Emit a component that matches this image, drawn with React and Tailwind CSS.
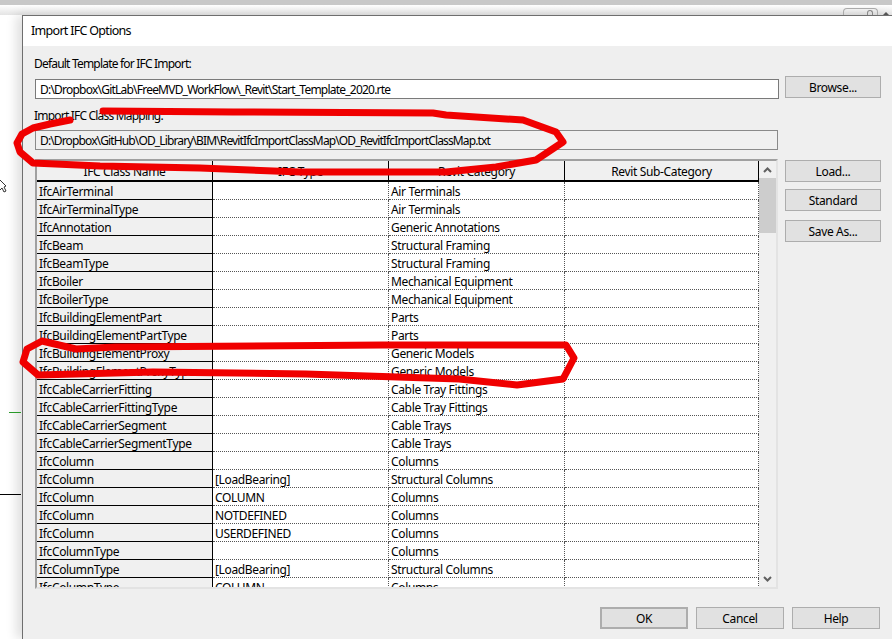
const rows = [
  ["IfcAirTerminal", "", "Air Terminals"],
  ["IfcAirTerminalType", "", "Air Terminals"],
  ["IfcAnnotation", "", "Generic Annotations"],
  ["IfcBeam", "", "Structural Framing"],
  ["IfcBeamType", "", "Structural Framing"],
  ["IfcBoiler", "", "Mechanical Equipment"],
  ["IfcBoilerType", "", "Mechanical Equipment"],
  ["IfcBuildingElementPart", "", "Parts"],
  ["IfcBuildingElementPartType", "", "Parts"],
  ["IfcBuildingElementProxy", "", "Generic Models"],
  ["IfcBuildingElementProxyType", "", "Generic Models"],
  ["IfcCableCarrierFitting", "", "Cable Tray Fittings"],
  ["IfcCableCarrierFittingType", "", "Cable Tray Fittings"],
  ["IfcCableCarrierSegment", "", "Cable Trays"],
  ["IfcCableCarrierSegmentType", "", "Cable Trays"],
  ["IfcColumn", "", "Columns"],
  ["IfcColumn", "[LoadBearing]", "Structural Columns"],
  ["IfcColumn", "COLUMN", "Columns"],
  ["IfcColumn", "NOTDEFINED", "Columns"],
  ["IfcColumn", "USERDEFINED", "Columns"],
  ["IfcColumnType", "", "Columns"],
  ["IfcColumnType", "[LoadBearing]", "Structural Columns"],
  ["IfcColumnType", "COLUMN", "Columns"],
];

function Btn({ children, className = "" }) {
  return (
    <div className={`flex h-[22px] items-center justify-center border border-[#adadad] bg-[#e1e1e1] pt-[2px] ${className}`}>
      {children}
    </div>
  );
}

function Head({ children, className = "" }) {
  return (
    <div className={`flex h-[21px] shrink-0 items-center justify-center border-r border-b-2 border-r-black border-b-black bg-[#f0f0f0] pt-[2px] ${className}`}>
      {children}
    </div>
  );
}

function Row({ r }) {
  return (
    <div className="flex h-[18px] shrink-0 leading-[19px]">
      <div className="w-[176px] shrink-0 overflow-hidden whitespace-nowrap border-r border-b border-black bg-[#f0f0f0] pl-[2px]">{r[0]}</div>
      <div className="w-[176px] shrink-0 overflow-hidden border-r border-b border-dotted border-[#555] pl-[2px]">{r[1]}</div>
      <div className="w-[176px] shrink-0 overflow-hidden border-r border-b border-dotted border-[#555] pl-[2px]">{r[2]}</div>
      <div className="w-[194px] shrink-0 border-r border-b border-dotted border-[#555]"></div>
    </div>
  );
}

export default function App() {
  return (
    <div className="relative h-[639px] w-[892px] overflow-hidden bg-white font-['Noto_Sans',sans-serif] text-[12px] tracking-[-0.35px] text-black">
      <div className="h-[5px] bg-[#c8c8c8]"></div>
      <div className="h-[10px] bg-gradient-to-b from-white to-[#e4e4e4]"></div>

      {/* Window-behind details */}
      <div className="absolute left-[843px] top-[8px] h-[7px] w-[35px] rounded-t-[4px] border-x border-t border-[#aaa]"></div>
      <div className="absolute left-[867px] top-[10px] h-[5px] w-[6px] rounded-t-full border-x border-t border-[#888]"></div>
      <svg className="absolute left-[883px] top-[12px]" width="6" height="3" viewBox="0 0 6 3"><path d="M0 3 L3 0 L6 3 Z" fill="#555" /></svg>
      <div className="absolute left-[9px] top-[412px] h-px w-[12px] bg-[#2a9a2a]"></div>
      <div className="absolute left-0 top-[494px] h-px w-[21px] bg-black"></div>
      <svg className="absolute left-0 top-[179px]" width="8" height="14" viewBox="0 0 8 14">
        <path d="M0 1 L6 7 L4 8 L6 12 L4 13 L2 9 L0 11" fill="white" stroke="#333" strokeWidth="1" />
      </svg>

      {/* Dialog */}
      <div className="ml-[22px] h-[624px] w-[870px] border-l border-t border-[#6e6e6e] shadow-[-6px_0_10px_rgba(0,0,0,0.12)]">
        <div className="flex h-[30px] items-center bg-white pl-[8px] text-[12.5px] tracking-[-0.7px]">Import IFC Options</div>
        <div className="flex h-[593px] flex-col bg-[#efefef] pl-[12px]">
          <div className="-ml-px mt-[10px] h-[16px] leading-[16px] tracking-[-0.8px]">Default Template for IFC Import:</div>
          <div className="flex items-start">
            <div className="mt-[7px] flex h-[20px] w-[744px] items-center border border-[#7a7a7a] bg-white pl-[4px] pt-[2px] tracking-[-0.78px]">
              D:\Dropbox\GitLab\FreeMVD_WorkFlow\_Revit\Start_Template_2020.rte
            </div>
            <Btn className="ml-[6px] mt-[4px] w-[96px]">Browse...</Btn>
          </div>
          <div className="-ml-px mt-[9px] h-[16px] leading-[16px] tracking-[-0.8px]">Import IFC Class Mapping:</div>
          <div className="mt-[6px] flex h-[20px] w-[743px] items-center border border-[#8a8a8a] bg-[#f0f0f0] pl-[4px] pt-[2px] tracking-[-0.87px]">
            D:\Dropbox\GitHub\OD_Library\BIM\RevitIfcImportClassMap\OD_RevitIfcImportClassMap.txt
          </div>

          <div className="mt-[9px] flex items-start">
            {/* Table */}
            <div className="flex h-[430px] w-[743px] flex-col overflow-hidden border-2 border-t-[#a0a0a0] border-l-[#a0a0a0] border-r-[#e3e3e3] border-b-[#e3e3e3] bg-white">
              <div className="relative flex h-full">
                <div className="flex h-full w-[722px] shrink-0 flex-col overflow-hidden">
                  <div className="flex shrink-0">
                    <Head className="w-[176px]">IFC Class Name</Head>
                    <Head className="w-[176px]">IFC Type</Head>
                    <Head className="w-[176px]">Revit Category</Head>
                    <Head className="w-[194px]">Revit Sub-Category</Head>
                  </div>
                  {rows.map((r, i) => <Row key={i} r={r} />)}
                </div>
                {/* Scrollbar */}
                <div className="flex h-full w-[17px] shrink-0 flex-col bg-[#f0f0f0]">
                  <div className="flex h-[17px] shrink-0 items-center justify-center">
                    <svg width="9" height="6" viewBox="0 0 9 6"><path d="M1 5 L4.5 1.5 L8 5" fill="none" stroke="#606060" strokeWidth="2" /></svg>
                  </div>
                  <div className="h-[55px] bg-[#cdcdcd]"></div>
                  <div className="flex-1"></div>
                  <div className="flex h-[17px] shrink-0 items-center justify-center">
                    <svg width="9" height="6" viewBox="0 0 9 6"><path d="M1 1 L4.5 4.5 L8 1" fill="none" stroke="#606060" strokeWidth="2" /></svg>
                  </div>
                </div>
              </div>
            </div>

            {/* Side buttons */}
            <div className="ml-[7px] flex w-[96px] shrink-0 flex-col">
              <Btn className="mt-[1px]">Load...</Btn>
              <Btn className="mt-[7px]">Standard</Btn>
              <Btn className="mt-[9px]">Save As...</Btn>
            </div>
          </div>

          <div className="mt-[18px] flex pl-[565px]">
            <Btn className="w-[88px] border-2 border-[#0078d7]">OK</Btn>
            <Btn className="ml-[8px] w-[88px]">Cancel</Btn>
            <Btn className="ml-[8px] w-[88px]">Help</Btn>
          </div>
        </div>
      </div>

      {/* Red hand-drawn annotations */}
      <svg className="pointer-events-none absolute left-0 top-0" width="892" height="639" viewBox="0 0 892 639" fill="none" stroke="#f00000" strokeLinecap="round" strokeLinejoin="round">
        <path strokeWidth="7" d="M103 111 L233 112 L433 113 L446 115 L523 120 L556 132 L563 142 L536 160 L496 167 L446 172 L300 172 L200 168 L100 166 L33 163 L20 152 L17 143 L22 134 L33 128 L50 124 L70 120" />
        <path strokeWidth="7" d="M115 347 L76 349 L42 341 L27 349 L23 362 L38 375 L153 372 L306 374 L459 379 L517 385 L563 379 L574 358 L566 345 L383 345 L115 347" />
      </svg>
    </div>
  );
}
